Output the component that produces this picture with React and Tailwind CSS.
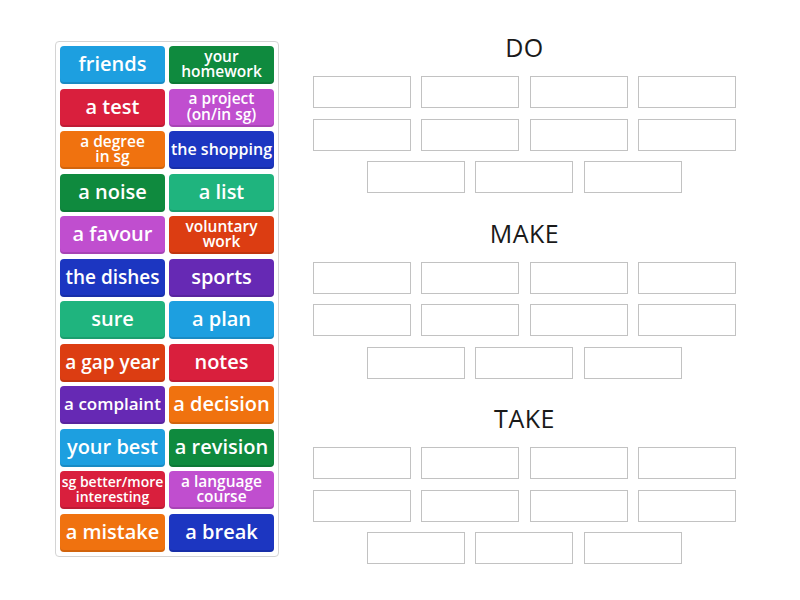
import React from 'react'

const C = {
    sky: 'bg-[#1d9fe0]',
    green: 'bg-[#0f8a3e]',
    red: 'bg-[#d91f3d]',
    pink: 'bg-[#c04ecf]',
    orange: 'bg-[#f0720f]',
    navy: 'bg-[#1c36c1]',
    teal: 'bg-[#1fb47e]',
    rust: 'bg-[#dc3d12]',
    purple: 'bg-[#6629b4]',
}

// word tiles, left to right, top to bottom
const tiles = [
    { text: 'friends', color: C.sky },
    { text: 'your homework', color: C.green, two: true },
    { text: 'a test', color: C.red },
    { text: 'a project (on/in sg)', color: C.pink, two: true, lines: ['a project', '(on/in sg)'] },
    { text: 'a degree in sg', color: C.orange, two: true, lines: ['a degree', 'in sg'] },
    { text: 'the shopping', color: C.navy, size: 'text-[16px]' },
    { text: 'a noise', color: C.green },
    { text: 'a list', color: C.teal },
    { text: 'a favour', color: C.pink },
    { text: 'voluntary work', color: C.rust, two: true, lines: ['voluntary', 'work'] },
    { text: 'the dishes', color: C.navy, size: 'text-[19px]' },
    { text: 'sports', color: C.purple },
    { text: 'sure', color: C.teal },
    { text: 'a plan', color: C.sky },
    { text: 'a gap year', color: C.rust, size: 'text-[19px]' },
    { text: 'notes', color: C.red },
    { text: 'a complaint', color: C.purple, size: 'text-[17px]' },
    { text: 'a decision', color: C.orange },
    { text: 'your best', color: C.sky },
    { text: 'a revision', color: C.green },
    { text: 'sg better/more interesting', color: C.red, two: true, lines: ['sg better/more', 'interesting'], size: 'text-[14px]' },
    { text: 'a language course', color: C.pink, two: true, lines: ['a language', 'course'] },
    { text: 'a mistake', color: C.orange },
    { text: 'a break', color: C.navy },
]

function Tile({ tile }) {
    const lines = tile.lines || (tile.two ? tile.text.split(' ') : [tile.text])
    const size = tile.size || (tile.two ? 'text-[15.5px]' : 'text-[20px]')
    return (
        <div className={`${tile.color} h-[38px] pb-[2px] rounded-[4px] shadow-[inset_0_-2px_0_rgba(0,0,0,0.12)] flex items-center justify-center text-center text-white font-semibold whitespace-nowrap ${size} ${tile.two ? 'leading-[15.5px]' : 'leading-[24px]'}`}>
            <span>
                {lines.map((l, i) => <React.Fragment key={i}>{i > 0 && <br />}{l}</React.Fragment>)}
            </span>
        </div>
    )
}

function Box() {
    return <div className="w-[98px] h-[32px] border border-[#c2c2c2] bg-white"></div>
}

function Section({ title }) {
    return (
        <div className="flex flex-col items-center">
            <div className="h-[34px] leading-[32px] text-[25px] text-[#1a1a1a] tracking-[0.5px]">{title}</div>
            <div className="mt-[11px] flex flex-col gap-y-[10.5px]">
                <div className="flex gap-x-[10.33px]">
                    <Box /><Box /><Box /><Box />
                </div>
                <div className="flex gap-x-[10.33px]">
                    <Box /><Box /><Box /><Box />
                </div>
                <div className="flex gap-x-[10.33px] justify-center">
                    <Box /><Box /><Box />
                </div>
            </div>
        </div>
    )
}

export default function App() {
    return (
        <div className="w-[800px] h-[600px] bg-white flex font-['Open_Sans',sans-serif]">
            <div className="ml-[55px] mt-[41px] w-[224px] h-[516px] border border-[#d4d4d4] rounded-[4px] p-[4px]">
                <div className="grid grid-cols-[105px_105px] gap-x-[4px] gap-y-[4.5px]">
                    {tiles.map((t, ndx) => <Tile key={ndx} tile={t} />)}
                </div>
            </div>

            <div className="ml-[34px] mt-[31px] w-[423px] flex flex-col gap-y-[23.5px]">
                <Section title="DO" />
                <Section title="MAKE" />
                <Section title="TAKE" />
            </div>
        </div>
    )
}
